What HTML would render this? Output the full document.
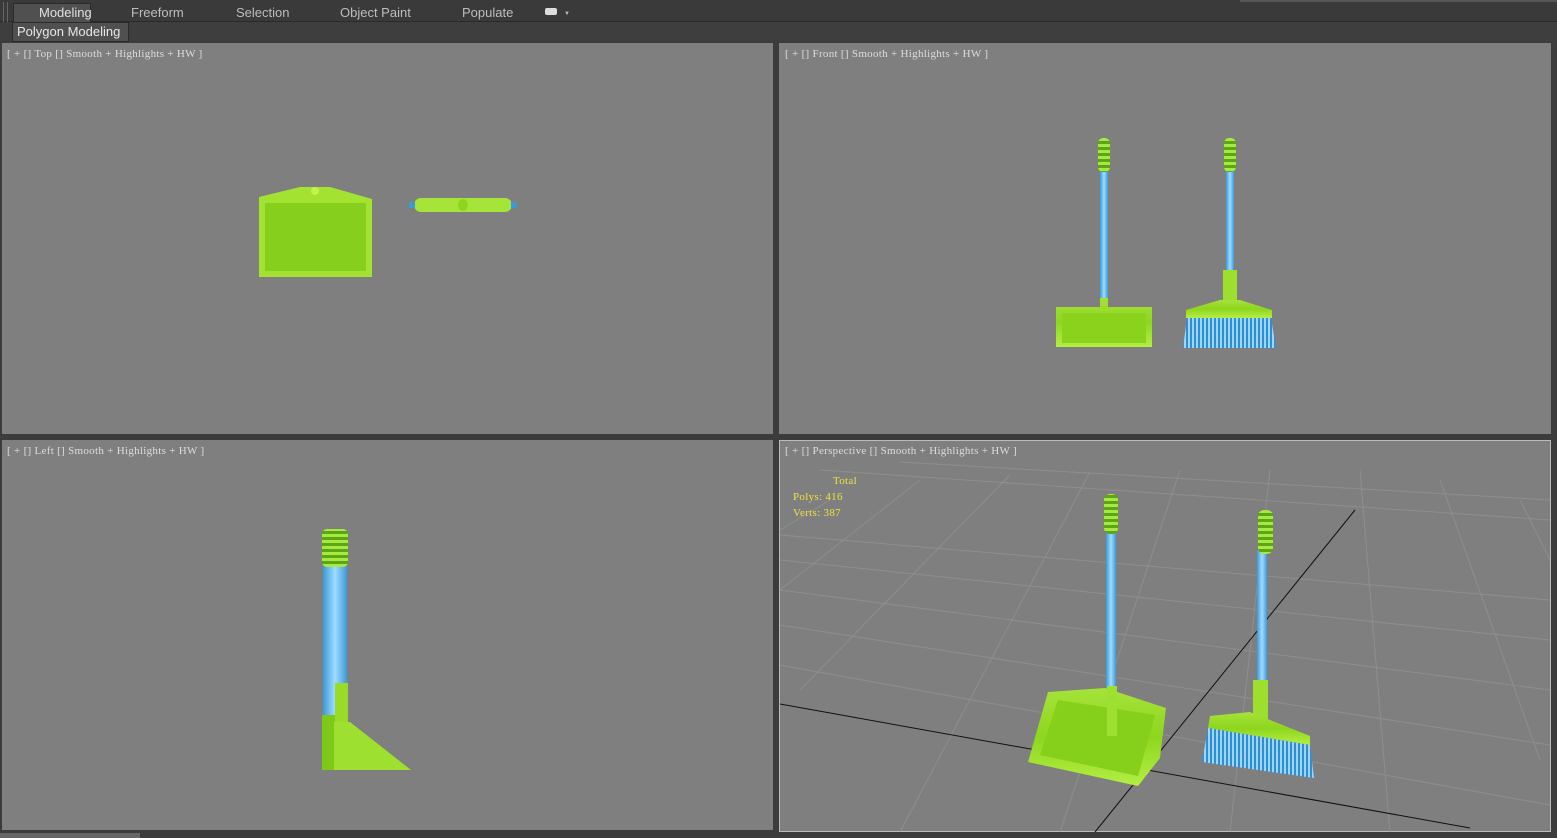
<!DOCTYPE html>
<html><head><meta charset="utf-8"><style>
body{margin:0;width:1557px;height:838px;background:#3c3c3c;overflow:hidden;position:relative;font-family:"Liberation Sans",sans-serif}
.vp{position:absolute;background:#7f7f7f}
.lbl{position:absolute;font-family:"Liberation Serif",serif;font-size:11px;color:#ddd;white-space:pre;letter-spacing:0.3px}
.tab{position:absolute;top:5px;font-size:13px;color:#bdbdbd}
</style></head><body>
<div style="position:absolute;left:0;top:0;width:1557px;height:21px;background:#3a3a3a;border-bottom:1px solid #2a2a2a"></div>
<div style="position:absolute;left:1240px;top:0;width:317px;height:2px;background:#555"></div>
<div style="position:absolute;left:3px;top:2px;width:3px;height:36px;border-left:1px solid #666;border-right:1px solid #666"></div>
<div style="position:absolute;left:13px;top:3px;width:76px;height:18px;background:#505050;border:1px solid #2a2a2a;border-bottom:none"></div>
<div class="tab" style="left:39px;color:#e0e0e0">Modeling</div>
<div class="tab" style="left:131px">Freeform</div>
<div class="tab" style="left:236px">Selection</div>
<div class="tab" style="left:340px">Object Paint</div>
<div class="tab" style="left:462px">Populate</div>
<div style="position:absolute;left:545px;top:8px;width:12px;height:7px;background:#ddd;border-radius:2px"></div>
<div style="position:absolute;left:564px;top:11px;font-size:6px;color:#bbb">▼</div>
<div style="position:absolute;left:0;top:22px;width:1557px;height:19px;background:#3e3e3e"></div>
<div style="position:absolute;left:12px;top:22px;width:115px;height:18px;background:#505050;border:1px solid #2a2a2a"></div>
<div style="position:absolute;left:17px;top:24px;font-size:13px;color:#e8e8e8">Polygon Modeling</div>

<div class="vp" style="left:2px;top:43px;width:771px;height:391px"></div>
<div class="vp" style="left:779px;top:43px;width:772px;height:391px"></div>
<div class="vp" style="left:2px;top:440px;width:771px;height:390px"></div>
<div class="vp" style="left:779px;top:440px;width:772px;height:392px;border:1px solid #bbb;box-sizing:border-box"></div>
<div style="position:absolute;left:0;top:833px;width:140px;height:5px;background:#666"></div>

<svg width="1557" height="838" style="position:absolute;left:0;top:0">
<defs>
<linearGradient id="g" x1="0" y1="0" x2="0" y2="1"><stop offset="0" stop-color="#a6e23a"/><stop offset="0.5" stop-color="#8ed61e"/><stop offset="1" stop-color="#b4ee44"/></linearGradient>
<linearGradient id="b" x1="0" y1="0" x2="1" y2="0"><stop offset="0" stop-color="#3a9ad8"/><stop offset="0.5" stop-color="#9fdcff"/><stop offset="1" stop-color="#3a9ad8"/></linearGradient>
<pattern id="br" width="4" height="10" patternUnits="userSpaceOnUse"><rect width="4" height="10" fill="#2f8fd0"/><rect width="2" height="10" fill="#9ad6ff"/></pattern>
<pattern id="grip" width="10" height="6" patternUnits="userSpaceOnUse"><rect width="10" height="6" fill="#5aa614"/><rect width="10" height="3" fill="#a8e840"/></pattern>
</defs>
<g stroke="#959595" stroke-width="1" fill="none" opacity="0.7">
<path d="M780 535 L1550 600 M780 560 L1550 640 M780 590 L1550 690 M780 625 L1550 745 M780 665 L1550 805 M820 470 L1550 520 M900 462 L1550 500"/>
<path d="M830 500 L780 530 M920 480 L780 590 M1010 475 L800 690 M1090 472 L900 832 M1180 470 L1060 832 M1270 470 L1230 832 M1360 470 L1390 832 M1440 480 L1540 760 M1520 500 L1550 560"/>
</g>
<path d="M780 704 L1470 828" stroke="#111" stroke-width="1"/>
<path d="M1355 510 L1095 832" stroke="#111" stroke-width="1"/>

<path d="M259 197 L300 187 L330 187 L372 199 L372 277 L259 277 Z" fill="#a4e232"/>
<rect x="265" y="203" width="101" height="68" fill="#86cf1c"/>
<circle cx="315" cy="191" r="4" fill="#c6f04a"/>
<rect x="414" y="198" width="98" height="14" rx="7" fill="#a6e43a"/>
<rect x="409" y="202" width="6" height="6" fill="#3a9ad8"/><rect x="511" y="202" width="6" height="6" fill="#3a9ad8"/>
<ellipse cx="463" cy="205" rx="5" ry="6" fill="#8ed61e"/>

<rect x="1100" y="170" width="8" height="130" fill="url(#b)"/>
<rect x="1098" y="138" width="12" height="34" rx="5" fill="url(#grip)"/>
<path d="M1056 307 L1100 307 L1100 298 L1108 298 L1108 307 L1152 307 L1152 347 L1056 347 Z" fill="url(#g)"/>
<rect x="1062" y="313" width="84" height="30" fill="#8ad21c"/>
<rect x="1226" y="170" width="8" height="102" fill="url(#b)"/>
<rect x="1224" y="138" width="12" height="34" rx="5" fill="url(#grip)"/>
<rect x="1223" y="270" width="14" height="32" fill="#9ede2c"/>
<path d="M1220 300 L1240 300 L1272 310 L1272 318 L1186 318 L1186 310 Z" fill="url(#g)"/>
<path d="M1187 318 L1271 318 L1276 348 L1183 348 Z" fill="url(#br)"/>

<rect x="323" y="565" width="24" height="155" fill="url(#b)"/>
<rect x="322" y="529" width="26" height="38" rx="5" fill="url(#grip)"/>
<rect x="335" y="683" width="13" height="40" fill="#98dc28"/>
<rect x="322" y="715" width="13" height="55" fill="#7ec818"/>
<path d="M334 722 L350 722 L411 770 L334 770 Z" fill="#9ee030"/>

<rect x="1106" y="530" width="10" height="160" fill="url(#b)"/>
<rect x="1104" y="494" width="14" height="40" rx="6" fill="url(#grip)"/>
<path d="M1048 692 L1105 688 L1166 708 L1160 758 L1138 786 L1028 762 Z" fill="url(#g)"/>
<path d="M1058 700 L1155 715 L1138 776 L1040 755 Z" fill="#86cf1a"/>
<rect x="1107" y="686" width="10" height="50" fill="#9ee030"/>
<rect x="1257" y="550" width="10" height="132" fill="url(#b)"/>
<rect x="1258" y="510" width="15" height="44" rx="6" fill="url(#grip)"/>
<rect x="1253" y="680" width="15" height="40" fill="#9ede2c"/>
<path d="M1210 716 L1250 712 L1310 736 L1310 745 L1208 728 Z" fill="url(#g)"/>
<path d="M1208 728 L1310 745 L1314 778 L1202 762 Z" fill="url(#br)"/>
</svg>

<div class="lbl" style="left:7px;top:48px">[ + [] Top [] Smooth + Highlights + HW ]</div>
<div class="lbl" style="left:785px;top:48px">[ + [] Front [] Smooth + Highlights + HW ]</div>
<div class="lbl" style="left:7px;top:445px">[ + [] Left [] Smooth + Highlights + HW ]</div>
<div class="lbl" style="left:785px;top:445px">[ + [] Perspective [] Smooth + Highlights + HW ]</div>
<div class="lbl" style="left:833px;top:475px;color:#f0e040">Total</div>
<div class="lbl" style="left:793px;top:491px;color:#f0e040">Polys: 416</div>
<div class="lbl" style="left:793px;top:507px;color:#f0e040">Verts: 387</div>
</body></html>
